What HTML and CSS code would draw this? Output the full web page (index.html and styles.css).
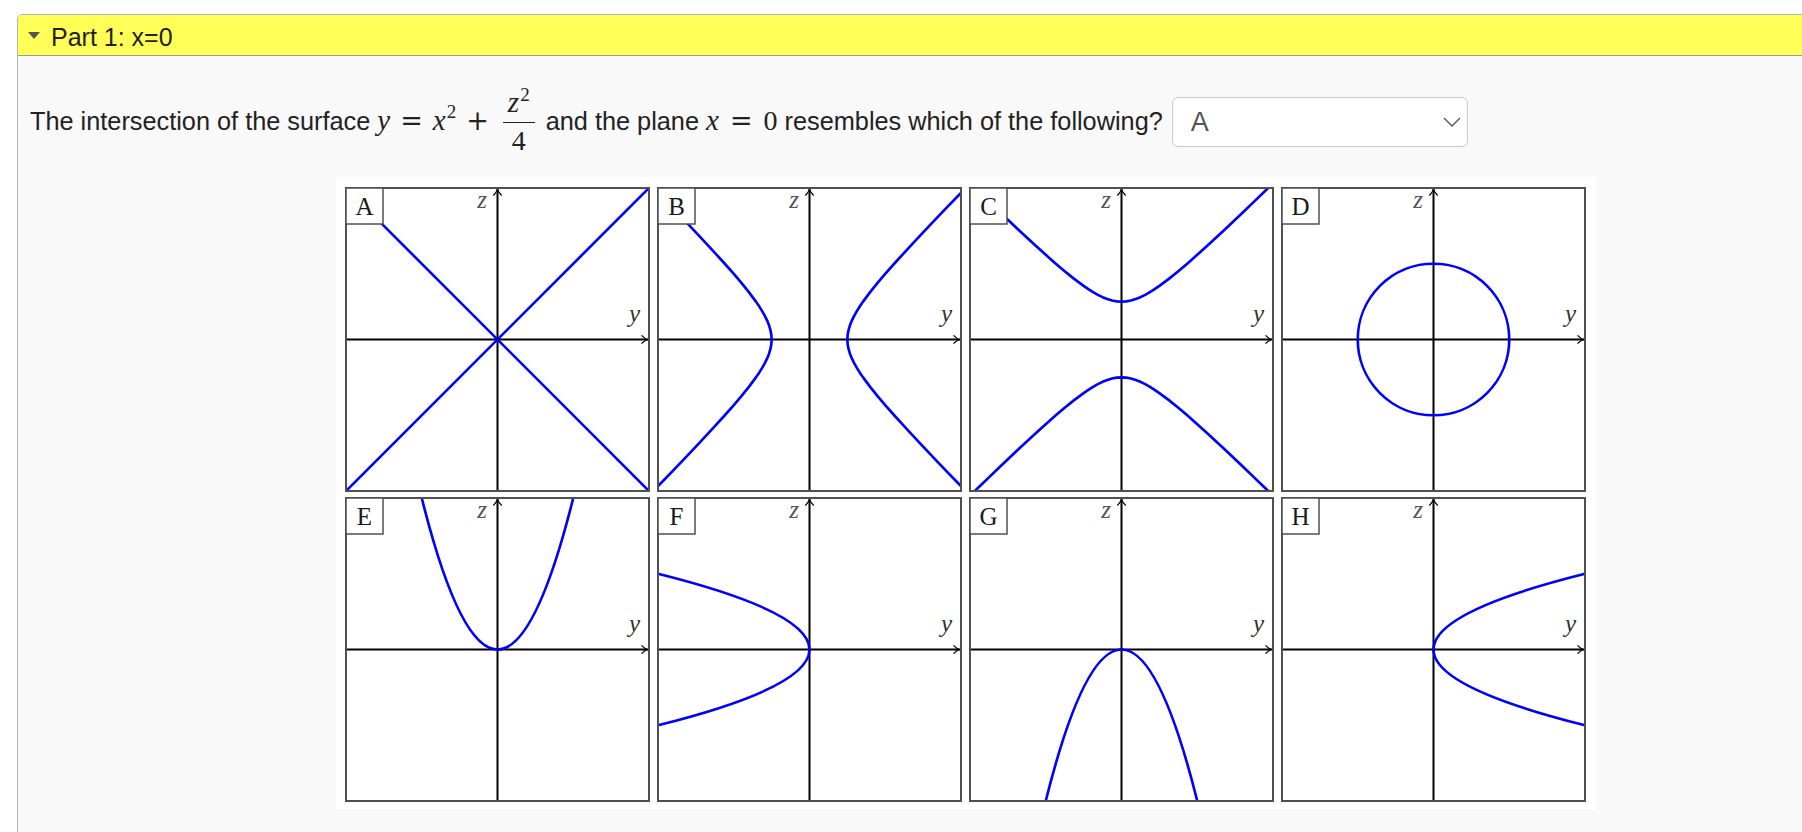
FILE: index.html
```html
<!DOCTYPE html>
<html lang="en">
<head>
<meta charset="utf-8">
<title>Part 1: x=0</title>
<link rel="stylesheet" href="styles.css">
</head>
<body>
<div class="panel">
  <div class="head">
    <svg class="tri" width="12" height="7" viewBox="0 0 12 7"><polygon points="0,0 12,0 6,7"/></svg>
    <span class="title">Part 1: x=0</span>
  </div>
  <div class="content">
    <div class="q">
      <div class="qt">The intersection of the surface <span class="m"><i>y</i><span class="rel">=</span><i>x</i><sup>2</sup><span class="bin">+</span><span class="frac"><span class="num"><i>z</i><sup>2</sup></span><span class="den">4</span></span></span> and the plane <span class="m m2"><i>x</i><span class="rel">=</span><span class="n">0</span></span> resembles which of the following?</div>
      <div class="sel">
        <select aria-label="answer">
          <option selected>A</option><option>B</option><option>C</option><option>D</option>
          <option>E</option><option>F</option><option>G</option><option>H</option>
        </select>
        <svg class="chev" viewBox="0 0 18 10"><polyline points="1,1 9,9 17,1"/></svg>
      </div>
    </div>
    <div class="fig">
      <svg class="g" viewBox="0 0 305 305"><use href="#axes"/><g class="cv" transform="translate(152.5 152.5) scale(37.875 -37.875)"><path d="M-4.2 -4.2 L4.2 4.2 M-4.2 4.2 L4.2 -4.2"/></g><use href="#frame"/><text class="lt" x="19.5" y="28">A</text></svg>
      <svg class="g" viewBox="0 0 305 305"><use href="#axes"/><g class="cv" transform="translate(152.5 152.5) scale(37.875 -37.875)"><use href="#hb"/><use href="#hb" transform="scale(-1 1)"/></g><use href="#frame"/><text class="lt" x="19.5" y="28">B</text></svg>
      <svg class="g" viewBox="0 0 305 305"><use href="#axes"/><g class="cv" transform="translate(152.5 152.5) scale(37.875 -37.875)"><use href="#hb" transform="matrix(0 1 1 0 0 0)"/><use href="#hb" transform="matrix(0 -1 1 0 0 0)"/></g><use href="#frame"/><text class="lt" x="19.5" y="28">C</text></svg>
      <svg class="g" viewBox="0 0 305 305"><use href="#axes"/><g class="cv" transform="translate(152.5 152.5) scale(37.875 -37.875)"><circle cx="0" cy="0" r="2"/></g><use href="#frame"/><text class="lt" x="19.5" y="28">D</text></svg>
      <svg class="g" viewBox="0 0 305 305"><use href="#axes"/><g class="cv" transform="translate(152.5 152.5) scale(37.875 -37.875)"><path d="M-2 4 Q0 -4 2 4"/></g><use href="#frame"/><text class="lt" x="19.5" y="28">E</text></svg>
      <svg class="g" viewBox="0 0 305 305"><use href="#axes"/><g class="cv" transform="translate(152.5 152.5) scale(37.875 -37.875)"><path d="M-4 2 Q4 0 -4 -2"/></g><use href="#frame"/><text class="lt" x="19.5" y="28">F</text></svg>
      <svg class="g" viewBox="0 0 305 305"><use href="#axes"/><g class="cv" transform="translate(152.5 152.5) scale(37.875 -37.875)"><path d="M-2 -4 Q0 4 2 -4"/></g><use href="#frame"/><text class="lt" x="19.5" y="28">G</text></svg>
      <svg class="g" viewBox="0 0 305 305"><use href="#axes"/><g class="cv" transform="translate(152.5 152.5) scale(37.875 -37.875)"><path d="M4 2 Q-4 0 4 -2"/></g><use href="#frame"/><text class="lt" x="19.5" y="28">H</text></svg>
    </div>
  </div>
</div>
<svg class="defs" width="0" height="0" aria-hidden="true">
  <defs>
    <g id="axes">
      <line class="axl" x1="152.5" y1="2" x2="152.5" y2="305"/>
      <line class="axl" x1="0" y1="152.5" x2="303" y2="152.5"/>
      <path class="arr" d="M148.3 8.5 Q151.5 5.5 152.5 2.2 Q153.5 5.5 156.7 8.5"/>
      <path class="arr" d="M296.5 148.3 Q299.5 151.5 302.8 152.5 Q299.5 153.5 296.5 156.7"/>
      <text class="az" x="142" y="21">z</text>
      <text class="ay" x="295" y="135">y</text>
    </g>
    <g id="frame">
      <rect class="fr" x="1" y="1" width="303" height="303"/>
      <rect class="lb" x="1" y="1" width="37" height="36"/>
    </g>
    <polyline id="hb" points="4.1231,-4 3.881,-3.75 3.6401,-3.5 3.4004,-3.25 3.1623,-3 2.9262,-2.75 2.6926,-2.5 2.4622,-2.25 2.2361,-2 2.0156,-1.75 1.8028,-1.5 1.6008,-1.25 1.4142,-1 1.3288,-0.875 1.25,-0.75 1.1792,-0.625 1.118,-0.5 1.068,-0.375 1.0308,-0.25 1.0078,-0.125 1,0 1.0078,0.125 1.0308,0.25 1.068,0.375 1.118,0.5 1.1792,0.625 1.25,0.75 1.3288,0.875 1.4142,1 1.6008,1.25 1.8028,1.5 2.0156,1.75 2.2361,2 2.4622,2.25 2.6926,2.5 2.9262,2.75 3.1623,3 3.4004,3.25 3.6401,3.5 3.881,3.75 4.1231,4"/>
  </defs>
</svg>
</body>
</html>
```

FILE: styles.css
```css
html, body {
  margin: 0;
  padding: 0;
  overflow: hidden;
  background: #fff;
}

body {
  font-family: "Liberation Sans", Arial, Helvetica, sans-serif;
  color: #222;
}

.panel {
  margin: 14px -30px 0 17px;
  border: 1px solid #b4b4b4;
  border-radius: 5px 5px 0 0;
  background: #f9f9f9;
  min-height: 900px;
}

.head {
  display: flex;
  align-items: flex-start;
  height: 40px;
  padding-left: 10px;
  background: #ffff57;
  border-bottom: 1px solid #9a9a9a;
  border-radius: 4px 4px 0 0;
}

.tri {
  flex: none;
  margin-top: 17px;
  fill: #555;
}

.title {
  margin: 10px 0 0 11px;
  font-size: 25px;
  line-height: 25px;
  color: #222;
}

.content {
  padding: 34px 0 0 12px;
}

.q {
  display: flex;
  align-items: flex-start;
  gap: 9px;
}

.qt {
  font-size: 25.3px;
  line-height: 30px;
  white-space: nowrap;
  color: #222;
}

.m i {
  font-family: "Liberation Serif", "Times New Roman", serif;
  font-style: italic;
  font-size: 29px;
}

.m sup {
  font-family: "Liberation Serif", "Times New Roman", serif;
  font-size: 19px;
  line-height: 0;
  vertical-align: 12px;
  margin-left: 1px;
}

.rel, .bin {
  font-family: "DejaVu Serif", serif;
  font-size: 27px;
  line-height: 0;
}

.rel {
  margin: 0 10px;
}

.m2 .rel {
  margin: 0 11px;
}

.bin {
  margin: 0 10px;
}

.n, .den {
  font-family: "Liberation Serif", "Times New Roman", serif;
  font-size: 28px;
}

.frac {
  display: inline-block;
  vertical-align: -20px;
  text-align: center;
  margin: 0 4px;
}

.num {
  display: block;
  line-height: 24px;
  padding: 0 5px 7px;
  border-bottom: 1.5px solid #222;
}

.num sup {
  vertical-align: 11px;
}

.den {
  display: block;
  line-height: 24px;
  padding-top: 6px;
}

.sel {
  position: relative;
  flex: none;
  width: 296px;
  height: 50px;
  margin-top: 7px;
}

.sel select {
  -webkit-appearance: none;
  appearance: none;
  display: block;
  width: 100%;
  height: 100%;
  box-sizing: border-box;
  margin: 0;
  padding: 0 0 0 18px;
  border: 1px solid #c8c8c8;
  border-radius: 6px;
  background: #fff;
  font-family: "Liberation Sans", Arial, sans-serif;
  font-size: 27px;
  color: #555;
  outline: none;
}

.chev {
  position: absolute;
  right: 7px;
  top: 20px;
  width: 18px;
  height: 10px;
  pointer-events: none;
}

.chev polyline {
  fill: none;
  stroke: #666;
  stroke-width: 1.6;
}

.fig {
  display: grid;
  grid-template-columns: repeat(4, 305px);
  grid-auto-rows: 305px;
  column-gap: 7px;
  row-gap: 5px;
  width: max-content;
  margin: 24px 0 0 306px;
  padding: 10px 10px 7px 9px;
  background: #fff;
}

.g {
  display: block;
  width: 305px;
  height: 305px;
}

.cv {
  fill: none;
  stroke: #0000ff;
  stroke-width: 0.07;
  stroke-linejoin: round;
}

.axl {
  stroke: #000;
  stroke-width: 2;
}

.arr {
  fill: none;
  stroke: #000;
  stroke-width: 1.2;
}

.az, .ay {
  font-family: "Liberation Serif", "Times New Roman", serif;
  font-style: italic;
  font-size: 25px;
  text-anchor: end;
}

.az {
  fill: #555;
}

.ay {
  fill: #333;
}

.fr {
  fill: none;
  stroke: #505050;
  stroke-width: 2;
}

.lb {
  fill: #fff;
  stroke: #505050;
  stroke-width: 1.5;
}

.lt {
  font-family: "Liberation Serif", "Times New Roman", serif;
  font-size: 25px;
  fill: #1a1a1a;
  text-anchor: middle;
}

.defs {
  display: block;
  width: 0;
  height: 0;
  overflow: hidden;
}
```
